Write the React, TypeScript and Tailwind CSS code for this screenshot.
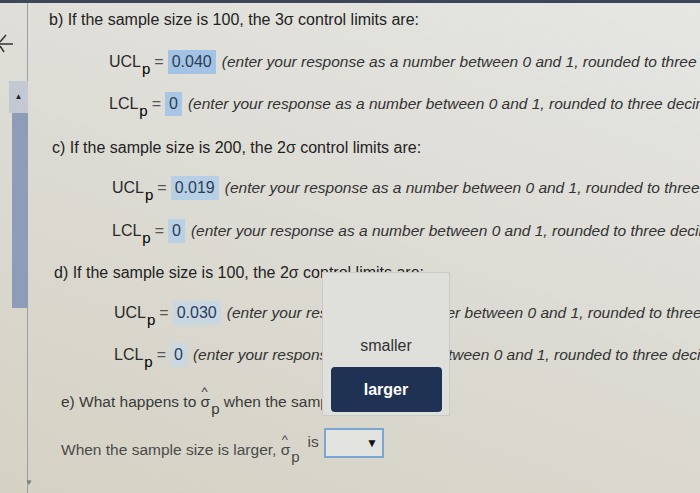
import React from 'react';

const font = { fontFamily: '"Liberation Sans", Arial, sans-serif' };

function Sub({ children }: { children: React.ReactNode }) {
  return <span className="relative top-[7px] ml-[1px] text-[15px]">{children}</span>;
}

function SigmaHat() {
  return (
    <span className="relative inline-block">
      σ
      <span className="absolute left-[1px] top-[-8px] text-[13px]">^</span>
    </span>
  );
}

function Answer({ value, tone }: { value: string; tone: string }) {
  return (
    <span className={`ml-[4px] inline-flex h-[24px] items-center px-[4px] text-[#2c3d57] ${tone}`}>{value}</span>
  );
}

function Limit({ label, value, tone, pl, note }: { label: string; value: string; tone: string; pl: string; note: string }) {
  return (
    <div className={`flex h-[32px] items-center ${pl}`}>
      <span className="text-[#2a2a2a]">{label}</span>
      <Sub>p</Sub>
      <span className="ml-[4px] text-[#555]">=</span>
      <Answer value={value} tone={tone} />
      <span className="ml-[6px] text-[15.5px] italic text-[#333]">{note}</span>
    </div>
  );
}

const NOTE = '(enter your response as a number between 0 and 1, rounded to three decimal places).';

export default function App() {
  return (
    <div
      className="relative h-[493px] w-[700px] overflow-hidden whitespace-nowrap bg-[linear-gradient(200deg,#e6e6e3_0%,#dddcd5_45%,#d5d2c4_100%)] text-[16px]"
      style={font}
    >
      <div className="h-[3px] bg-[#3d4658]" />
      <div className="flex h-[490px]">
        {/* sidebar */}
        <div className="relative w-[28px] shrink-0 border-r border-[#98a0aa]">
          <svg className="absolute left-0 top-[28px]" width="14" height="24" viewBox="0 0 14 24">
            <path d="M6 4 L0 11" stroke="#333" strokeWidth="1.5" fill="none" />
            <path d="M0 15 L4 21" stroke="#333" strokeWidth="1.5" fill="none" />
            <path d="M0 13 H13" stroke="#333" strokeWidth="1.5" fill="none" />
          </svg>
          <div className="absolute left-[9px] top-[78px] flex h-[32px] w-[19px] items-center justify-center bg-[#c3c8d3] text-[8px] text-[#222]">
            ▲
          </div>
          <div className="absolute left-[12px] top-[110px] h-[195px] w-[16px] bg-[#8f9cb8]" />
          <div className="absolute left-[25px] top-[474px] text-[8px] text-[#777]">▼</div>
        </div>

        {/* content */}
        <div className="flex flex-1 flex-col">
          <div className="mt-[1px] flex h-[32px] items-center pl-[21px] text-[#232323]">
            b) If the sample size is 100, the 3σ control limits are:
          </div>
          <div className="mt-[10px]">
            <Limit label="UCL" value="0.040" tone="bg-[#a3c3e4]" pl="pl-[81px]" note={NOTE} />
          </div>
          <div className="mt-[10px]">
            <Limit label="LCL" value="0" tone="bg-[#a9c7e5]" pl="pl-[81px]" note={NOTE} />
          </div>
          <div className="mt-[12px] flex h-[32px] items-center pl-[24px] text-[#232323]">
            c) If the sample size is 200, the 2σ control limits are:
          </div>
          <div className="mt-[8px]">
            <Limit label="UCL" value="0.019" tone="bg-[#b7cfe4]" pl="pl-[84px]" note={NOTE} />
          </div>
          <div className="mt-[11px]">
            <Limit label="LCL" value="0" tone="bg-[#bad0e4]" pl="pl-[84px]" note={NOTE} />
          </div>
          <div className="mt-[10px] flex h-[32px] items-center pl-[26px] text-[#232323]">
            d) If the sample size is 100, the 2σ control limits are:
          </div>
          <div className="mt-[8px]">
            <Limit label="UCL" value="0.030" tone="bg-[#c9d7e2]" pl="pl-[86px]" note={NOTE} />
          </div>
          <div className="mt-[10px]">
            <Limit label="LCL" value="0" tone="bg-[#cbd8e2]" pl="pl-[86px]" note={NOTE} />
          </div>
          <div className="mt-[15px] flex h-[32px] items-center pl-[33px] text-[15.5px] text-[#3a3a3a]">
            e) What happens to&nbsp;
            <SigmaHat />
            <Sub>p</Sub>
            &nbsp;when the sample size grows?
          </div>
          <div className="mt-[16px] flex h-[32px] items-center pl-[33px] text-[15.5px] text-[#4a4a4a]">
            When the sample size is larger,&nbsp;
            <SigmaHat />
            <Sub>p</Sub>
            <span className="relative top-[-8px] ml-[8px]">is</span>
            <div className="relative top-[-7px] ml-[5px] flex h-[30px] w-[60px] items-center justify-end border-2 border-[#79a6d2] bg-[#e3e3df] pr-[4px] text-[12px] text-[#111]">
              ▼
            </div>
          </div>
        </div>
      </div>

      {/* open dropdown menu */}
      <div className="absolute left-[322px] top-[272px] flex h-[144px] w-[128px] flex-col items-center border border-[#c9cbc8] bg-[#dfdfdb]">
        <div className="mt-[61px] text-[#333]">smaller</div>
        <div className="mt-[9px] flex h-[45px] w-[111px] items-center justify-center rounded-[4px] bg-[#1f3253] font-bold text-white">
          larger
        </div>
      </div>
    </div>
  );
}
